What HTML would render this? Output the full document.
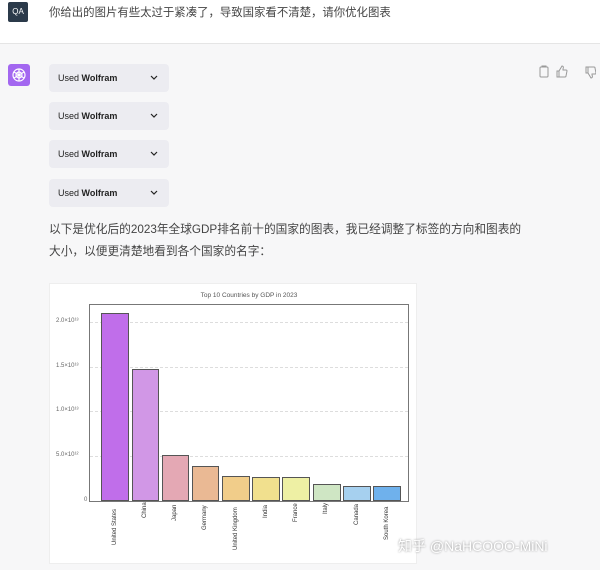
<!DOCTYPE html>
<html><head><meta charset="utf-8"><style>
*{margin:0;padding:0;box-sizing:border-box}
body{width:600px;height:570px;overflow:hidden;background:#f7f7f8;font-family:"Liberation Sans","Noto Sans CJK SC",sans-serif;position:relative;color:#374151}
.abs{position:absolute}
.top{left:0;top:0;width:600px;height:44px;background:#fff;border-bottom:1px solid #e5e5e5}
.qa{left:8px;top:2px;width:20px;height:20px;background:#2b3a4a;color:#fff;font-size:8px;line-height:20px;text-align:center;border-radius:2px}
.btn{left:49px;width:120px;height:28px;background:#ececf1;border-radius:4px;font-size:9px;line-height:28px;padding-left:9px;color:#222}
.btn b{font-weight:bold}
.btn svg{position:absolute;right:11px;top:11px}
.t{color:#444;white-space:nowrap}
.bar{position:absolute;border:1px solid #555}
.yl{position:absolute;font-size:6px;color:#666;left:56px}
.xl{position:absolute;font-size:6px;color:#333;transform-origin:0 0;transform:rotate(-90deg);white-space:nowrap}
.g{position:absolute;left:90px;width:318px;border-top:1px dashed #ddd}
</style></head><body>
<div class="abs top"></div>
<div class="abs qa">QA</div>
<div class="abs t" style="left:49px;top:4px;font-size:11.4px">你给出的图片有些太过于紧凑了，导致国家看不清楚，请你优化图表</div>
<div class="abs" style="left:8px;top:64px;width:22px;height:22px;background:#a367f0;border-radius:3px">
<svg width="22" height="22" viewBox="0 0 22 22"><g fill="none" stroke="#fff" stroke-width="1.2"><circle cx="11" cy="11" r="6"/><circle cx="11" cy="11" r="3"/><path d="M11 5v6M16 8l-5 3M16 14l-5-3M11 17v-6M6 14l5-3M6 8l5 3"/></g></svg></div>
<div class="abs btn" style="top:64px">Used <b>Wolfram</b><svg width="8" height="6" viewBox="0 0 8 6"><path d="M1 1l3 3 3-3" stroke="#222" stroke-width="1.2" fill="none"/></svg></div>
<div class="abs btn" style="top:102px">Used <b>Wolfram</b><svg width="8" height="6" viewBox="0 0 8 6"><path d="M1 1l3 3 3-3" stroke="#222" stroke-width="1.2" fill="none"/></svg></div>
<div class="abs btn" style="top:140px">Used <b>Wolfram</b><svg width="8" height="6" viewBox="0 0 8 6"><path d="M1 1l3 3 3-3" stroke="#222" stroke-width="1.2" fill="none"/></svg></div>
<div class="abs btn" style="top:179px">Used <b>Wolfram</b><svg width="8" height="6" viewBox="0 0 8 6"><path d="M1 1l3 3 3-3" stroke="#222" stroke-width="1.2" fill="none"/></svg></div>
<svg class="abs" style="left:538px;top:65px" width="58" height="14" viewBox="0 0 58 14"><g fill="none" stroke="#999" stroke-width="1"><rect x="2" y="2" width="8" height="10" rx="1"/><path d="M4 2v-1h4v1"/><path d="M21 6v6h-2v-6zM21 6l3-5c1 0 2 1 1 3l0 1h3c1 0 1 1 1 1l-1 5c0 1-1 1-1 1h-6"/><path d="M50 8v-6h-2v6zM50 8l3 5c1 0 2-1 1-3l0-1h3c1 0 1-1 1-1l-1-5c0-1-1-1-1-1h-6"/></g></svg>
<div class="abs t" style="left:49px;top:220px;font-size:11.7px">以下是优化后的2023年全球GDP排名前十的国家的图表，我已经调整了标签的方向和图表的</div>
<div class="abs t" style="left:49px;top:242px;font-size:11.7px">大小，以便更清楚地看到各个国家的名字：</div>
<div class="abs" style="left:49px;top:283px;width:368px;height:281px;background:#fff;border:1px solid #eee"></div>
<div class="abs" style="left:90px;top:292px;width:318px;text-align:center;font-size:6.5px;color:#555">Top 10 Countries by GDP in 2023</div>
<div class="g" style="top:322px"></div><div class="g" style="top:367px"></div><div class="g" style="top:411px"></div><div class="g" style="top:456px"></div>
<div class="abs" style="left:89px;top:304px;width:320px;height:198px;border:1px solid #777"></div>
<div class="yl" style="top:318px">2.0×10¹³</div>
<div class="yl" style="top:363px">1.5×10¹³</div>
<div class="yl" style="top:407px">1.0×10¹³</div>
<div class="yl" style="top:452px">5.0×10¹²</div>
<div class="yl" style="top:497px;left:84px">0</div>
<div class="bar" style="left:101px;width:28px;top:313px;height:188px;background:#c06eea"></div>
<div class="bar" style="left:132px;width:27px;top:369px;height:132px;background:#d197e6"></div>
<div class="bar" style="left:162px;width:27px;top:455px;height:46px;background:#e4a8b4"></div>
<div class="bar" style="left:192px;width:27px;top:466px;height:35px;background:#eab994"></div>
<div class="bar" style="left:222px;width:28px;top:476px;height:25px;background:#f1cd8a"></div>
<div class="bar" style="left:252px;width:28px;top:477px;height:24px;background:#f1e08e"></div>
<div class="bar" style="left:282px;width:28px;top:477px;height:24px;background:#eef0a4"></div>
<div class="bar" style="left:313px;width:28px;top:484px;height:17px;background:#cfe6c4"></div>
<div class="bar" style="left:343px;width:28px;top:486px;height:15px;background:#a6d0ef"></div>
<div class="bar" style="left:373px;width:28px;top:486px;height:15px;background:#6fb1ec"></div>
<div class="xl" style="left:112px;top:545px">United States</div>
<div class="xl" style="left:142px;top:518px">China</div>
<div class="xl" style="left:172px;top:521px">Japan</div>
<div class="xl" style="left:202px;top:530px">Germany</div>
<div class="xl" style="left:233px;top:550px">United Kingdom</div>
<div class="xl" style="left:263px;top:518px">India</div>
<div class="xl" style="left:293px;top:522px">France</div>
<div class="xl" style="left:323px;top:514px">Italy</div>
<div class="xl" style="left:354px;top:525px">Canada</div>
<div class="xl" style="left:384px;top:540px">South Korea</div>
<div class="abs" style="left:398px;top:536px;font-size:14px;color:#fff;text-shadow:0 0 2px #888">知乎 @NaHCOOO-MiNi</div>
</body></html>
